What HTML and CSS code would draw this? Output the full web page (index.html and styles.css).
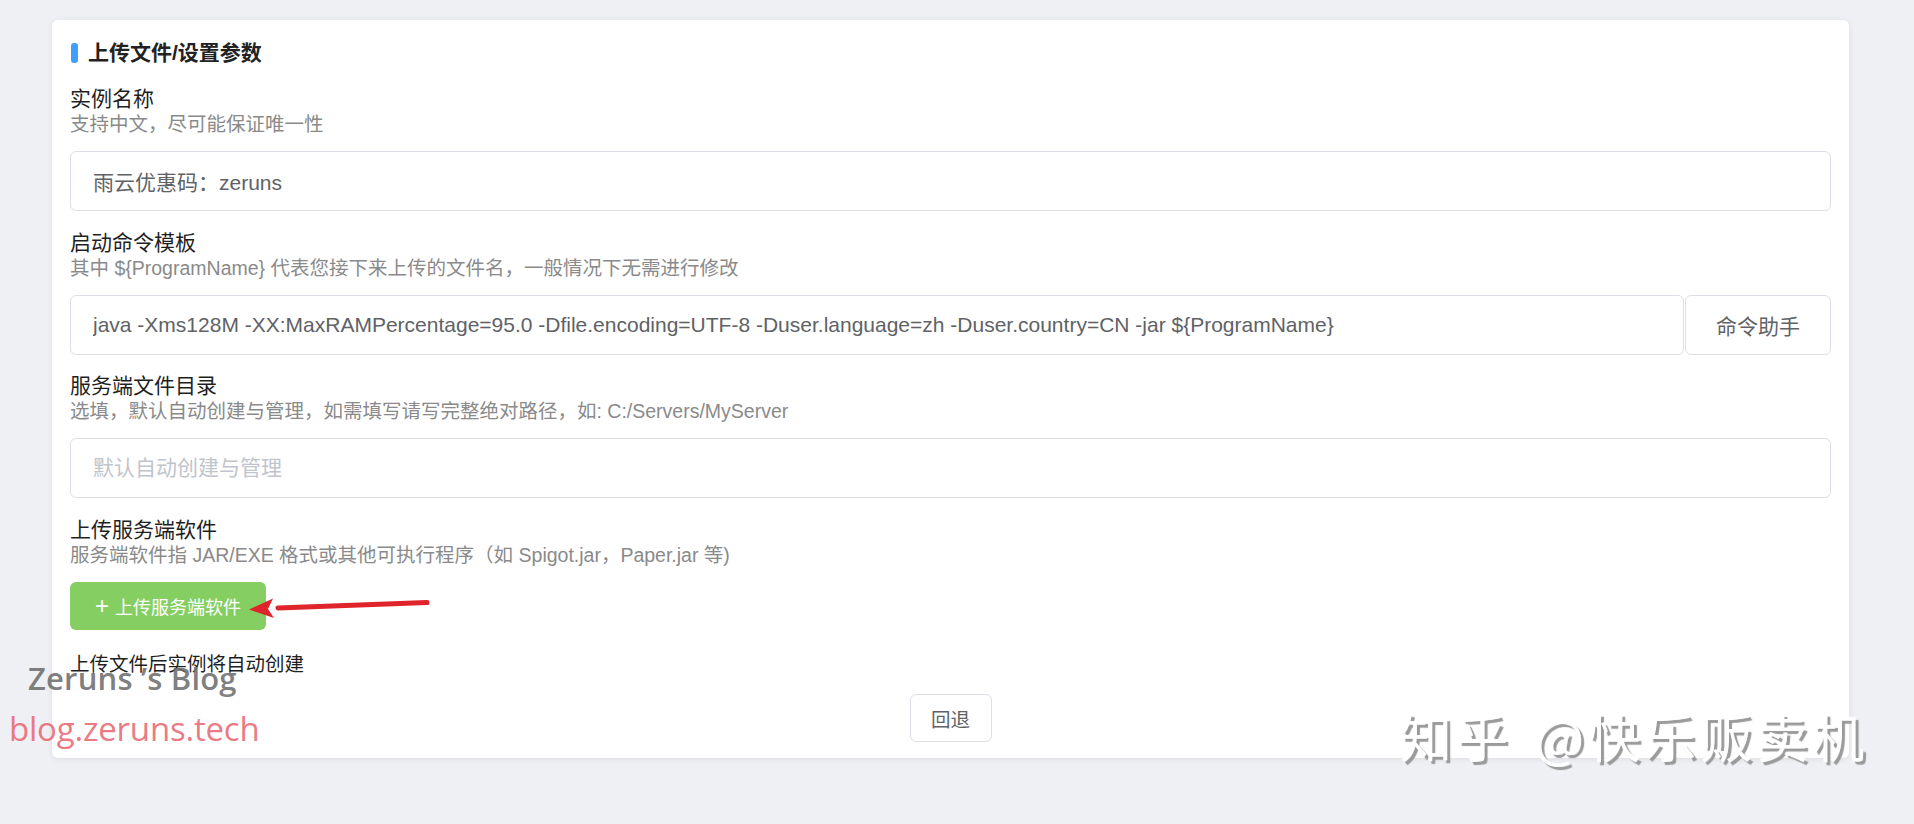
FILE: index.html
```html
<!DOCTYPE html>
<html>
<head>
    <title>上传文件/设置参数</title>
    <link rel="stylesheet" href="styles.css">
</head>
<body>
    <div class="page">
        <div class="card">
            <div class="card-title">上传文件/设置参数</div>

            <div class="field">
                <div class="field-label">实例名称</div>
                <div class="field-desc">支持中文，尽可能保证唯一性</div>
                <input type="text" class="text-input" value="雨云优惠码：zeruns">
            </div>

            <div class="field">
                <div class="field-label">启动命令模板</div>
                <div class="field-desc">其中 ${ProgramName} 代表您接下来上传的文件名，一般情况下无需进行修改</div>
                <div class="input-group">
                    <input type="text" class="text-input" value="java -Xms128M -XX:MaxRAMPercentage=95.0 -Dfile.encoding=UTF-8 -Duser.language=zh -Duser.country=CN -jar ${ProgramName}">
                    <button type="button" class="btn btn-addon">命令助手</button>
                </div>
            </div>

            <div class="field">
                <div class="field-label">服务端文件目录</div>
                <div class="field-desc">选填，默认自动创建与管理，如需填写请写完整绝对路径，如: C:/Servers/MyServer</div>
                <input type="text" class="text-input" placeholder="默认自动创建与管理">
            </div>

            <div class="field">
                <div class="field-label">上传服务端软件</div>
                <div class="field-desc">服务端软件指 JAR/EXE 格式或其他可执行程序（如 Spigot.jar，Paper.jar 等)</div>
                <div class="upload-row">
                    <button type="button" class="btn btn-upload"><span class="plus">+</span>上传服务端软件</button>
                    <svg class="arrow" width="190" height="30" viewBox="0 0 190 30">
                        <path d="M179 10.5 L30 16" stroke="#e0242b" stroke-width="5" stroke-linecap="round" fill="none"/>
                        <path d="M1 17.5 L25 6.5 L20 17 L26 26 Z" fill="#e0242b"/>
                    </svg>
                </div>
            </div>

            <div class="note">上传文件后实例将自动创建</div>

            <div class="footer">
                <button type="button" class="btn btn-back">回退</button>
            </div>
        </div>

        <div class="mark-blog">
            <div class="mark-name">Zeruns ’s Blog</div>
            <div class="mark-url">blog.zeruns.tech</div>
        </div>
        <div class="mark-zhihu"><span class="zhihu-logo">知乎</span>@快乐贩卖机</div>
    </div>
</body>
</html>
```

FILE: styles.css
```css
body {
    margin: 0;
    background-color: #eef0f4;
    font-family: "Liberation Sans", "Noto Sans CJK SC", sans-serif;
    color: #1f1f1f;
}

.page {
    position: relative;
    height: 824px;
    padding: 20px 65px 0 52px;
    box-sizing: border-box;
}

.card {
    height: 738px;
    box-sizing: border-box;
    background-color: #fff;
    border-radius: 6px;
    box-shadow: 0 1px 6px rgba(0, 0, 0, 0.08);
    padding: 17px 18px 17px 18px;
    display: flex;
    flex-direction: column;
}

.card-title {
    display: flex;
    align-items: center;
    font-size: 21px;
    font-weight: bold;
    line-height: 32px;
    color: #222;
    margin-bottom: 17px;
}

.card-title::before {
    content: "";
    width: 7px;
    height: 20px;
    border-radius: 3px;
    background-color: #409eff;
    margin: 0 10px 0 1px;
}

.field {
    display: flex;
    flex-direction: column;
    margin-bottom: 18.5px;
}

.field-label {
    font-size: 21px;
    line-height: 26px;
    color: #1f1f1f;
}

.field-desc {
    font-size: 19.5px;
    line-height: 24px;
    color: #8a8a8a;
    margin-bottom: 15px;
}

.text-input {
    height: 60px;
    box-sizing: border-box;
    width: 100%;
    border: 1px solid #dcdfe6;
    border-radius: 6px;
    padding: 0 22px;
    font-family: "Liberation Sans", "Noto Sans CJK SC", sans-serif;
    font-size: 21px;
    color: #606266;
    background-color: #fff;
    outline: none;
}

.text-input::placeholder {
    color: #c0c4cc;
}

.input-group {
    display: flex;
}

.input-group .text-input {
    flex: 1;
}

.btn {
    font-family: "Liberation Sans", "Noto Sans CJK SC", sans-serif;
    cursor: pointer;
    border-radius: 6px;
}

.btn-addon {
    width: 146px;
    height: 60px;
    margin-left: 1px;
    border: 1px solid #dcdfe6;
    background-color: #fff;
    color: #606266;
    font-size: 21px;
}

.upload-row {
    display: flex;
    align-items: center;
    position: relative;
}

.btn-upload {
    width: 196px;
    height: 48px;
    border: none;
    background-color: #85ce61;
    color: #fff;
    font-size: 18px;
    display: flex;
    align-items: center;
    justify-content: center;
}

.plus {
    font-size: 24px;
    font-weight: 300;
    margin-right: 6px;
    line-height: 1;
}

.arrow {
    position: absolute;
    left: 178px;
    top: 10px;
}

.note {
    font-size: 19.5px;
    line-height: 26px;
    color: #1f1f1f;
    margin-top: 3px;
}

.footer {
    display: flex;
    justify-content: center;
    margin-top: 17px;
}

.btn-back {
    width: 82px;
    height: 48px;
    border: 1px solid #dcdfe6;
    background-color: #fff;
    color: #606266;
    font-size: 19.5px;
}

.mark-blog {
    position: absolute;
    left: 9px;
    top: 658px;
    font-family: "Open Sans", "Noto Sans", sans-serif;
}

.mark-name {
    font-size: 31px;
    font-weight: 600;
    line-height: 40px;
    color: rgba(110, 110, 110, 0.9);
    margin-left: 19px;
    letter-spacing: 0.2px;
}

.mark-url {
    font-size: 33px;
    font-weight: 500;
    line-height: 54px;
    margin-top: 4px;
    color: rgba(232, 105, 115, 0.88);
    letter-spacing: -0.2px;
}

.mark-zhihu {
    position: absolute;
    left: 1400px;
    top: 705px;
    font-family: "Noto Sans CJK SC", sans-serif;
    font-size: 52px;
    line-height: 62px;
    color: #fff;
    letter-spacing: 4px;
    text-shadow: 3px 3px 1px #9a9a9a;
}

.zhihu-logo {
    letter-spacing: 4px;
    margin-right: 23px;
}
```
